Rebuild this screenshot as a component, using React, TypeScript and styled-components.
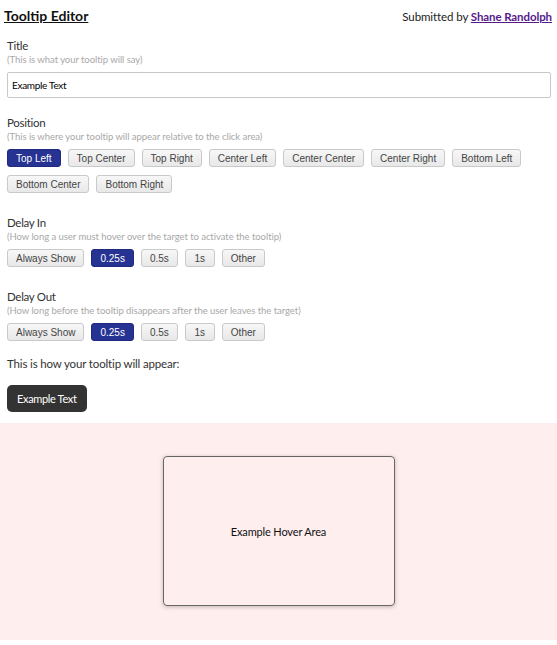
import * as React from "react"
import { useState } from "react"
import styled, { createGlobalStyle } from "styled-components"

const GlobalStyle = createGlobalStyle`
    html, body {
        margin: 0;
        padding: 0;
        background: #ffffff;
    }
    body {
        font-family: Lato, "Open Sans", sans-serif;
        color: #222222;
    }
    * {
        box-sizing: border-box;
    }
`

const Page = styled.div`
    width: 557px;
    display: flex;
    flex-direction: column;
`

const Header = styled.header`
    display: flex;
    justify-content: space-between;
    align-items: baseline;
    padding: 6px 5px 0 4px;
`

const AppTitle = styled.h1`
    margin: 0;
    font-size: 14px;
    line-height: 20px;
    font-weight: 700;
    text-decoration: underline;
    color: #111111;
`

const Credit = styled.div`
    font-size: 11.5px;
    letter-spacing: -0.1px;
    color: #222222;

    a {
        color: #551a8b;
        font-weight: 700;
        text-decoration: underline;
    }
`

const Editor = styled.div`
    display: flex;
    flex-direction: column;
    padding: 0 6px 0 7px;
`

const Field = styled.section<{ $top: number }>`
    display: flex;
    flex-direction: column;
    margin-top: ${(p) => p.$top}px;
`

const Label = styled.div`
    font-size: 11.5px;
    line-height: 16px;
    letter-spacing: -0.3px;
    color: #333333;
`

const Hint = styled.div`
    font-size: 9.5px;
    line-height: 12px;
    letter-spacing: -0.05px;
    color: #a8a8a8;
    margin-bottom: 6px;
`

const TextInput = styled.input`
    width: 100%;
    height: 26px;
    border: 1px solid #c8c8c8;
    border-radius: 2px;
    padding: 0 4px;
    font-family: Lato, sans-serif;
    font-size: 10px;
    letter-spacing: -0.3px;
    color: #000000;
    outline: none;
`

const Options = styled.div`
    display: flex;
    flex-wrap: wrap;
    column-gap: 7px;
    row-gap: 8px;
`

const Option = styled.button<{ $active: boolean }>`
    height: 18px;
    min-width: 30px;
    padding: 0 8px;
    border-radius: 3px;
    font-family: "Liberation Sans", Arial, sans-serif;
    font-size: 10px;
    cursor: pointer;
    border: 1px solid ${(p) => (p.$active ? "#1f2a80" : "#c9c9c9")};
    background: ${(p) => (p.$active ? "#263393" : "linear-gradient(#f7f7f7, #e8e8e8)")};
    color: ${(p) => (p.$active ? "#ffffff" : "#444444")};
`

const PreviewLabel = styled.div`
    margin-top: 15px;
    font-size: 11.5px;
    line-height: 16px;
    letter-spacing: -0.15px;
    color: #333333;
`

const Bubble = styled.div`
    align-self: flex-start;
    margin-top: 13px;
    height: 27px;
    padding: 0 10px;
    display: flex;
    align-items: center;
    border-radius: 5px;
    background: #333333;
    color: #ffffff;
    font-size: 11px;
    letter-spacing: -0.35px;
`

const Stage = styled.div`
    margin-top: 11px;
    height: 217px;
    background: #ffeeee;
    display: flex;
    justify-content: center;
    padding-top: 33px;
`

const HoverArea = styled.div`
    width: 232px;
    height: 150px;
    border: 1px solid #666666;
    border-radius: 4px;
    box-shadow: 0 1px 4px rgba(0, 0, 0, 0.25);
    display: flex;
    align-items: center;
    justify-content: center;
    font-size: 11px;
    letter-spacing: -0.15px;
    color: #111111;
`

const positions = [
    "Top Left",
    "Top Center",
    "Top Right",
    "Center Left",
    "Center Center",
    "Center Right",
    "Bottom Left",
    "Bottom Center",
    "Bottom Right",
]

const delays = ["Always Show", "0.25s", "0.5s", "1s", "Other"]

export default function App() {
    const [title, setTitle] = useState("Example Text")
    const [position, setPosition] = useState("Top Left")
    const [delayIn, setDelayIn] = useState("0.25s")
    const [delayOut, setDelayOut] = useState("0.25s")

    return (
        <Page>
            <GlobalStyle />
            <Header>
                <AppTitle>Tooltip Editor</AppTitle>
                <Credit>
                    Submitted by <a href="#">Shane Randolph</a>
                </Credit>
            </Header>
            <Editor>
                <Field $top={12}>
                    <Label>Title</Label>
                    <Hint>(This is what your tooltip will say)</Hint>
                    <TextInput value={title} onChange={(e) => setTitle(e.target.value)} />
                </Field>
                <Field $top={17}>
                    <Label>Position</Label>
                    <Hint>(This is where your tooltip will appear relative to the click area)</Hint>
                    <Options>
                        {positions.map((p) => (
                            <Option key={p} $active={p === position} onClick={() => setPosition(p)}>
                                {p}
                            </Option>
                        ))}
                    </Options>
                </Field>
                <Field $top={22}>
                    <Label>Delay In</Label>
                    <Hint>(How long a user must hover over the target to activate the tooltip)</Hint>
                    <Options>
                        {delays.map((d) => (
                            <Option key={d} $active={d === delayIn} onClick={() => setDelayIn(d)}>
                                {d}
                            </Option>
                        ))}
                    </Options>
                </Field>
                <Field $top={22}>
                    <Label>Delay Out</Label>
                    <Hint>(How long before the tooltip disappears after the user leaves the target)</Hint>
                    <Options>
                        {delays.map((d) => (
                            <Option key={d} $active={d === delayOut} onClick={() => setDelayOut(d)}>
                                {d}
                            </Option>
                        ))}
                    </Options>
                </Field>
                <PreviewLabel>This is how your tooltip will appear:</PreviewLabel>
                <Bubble>{title}</Bubble>
            </Editor>
            <Stage>
                <HoverArea>Example Hover Area</HoverArea>
            </Stage>
        </Page>
    )
}
